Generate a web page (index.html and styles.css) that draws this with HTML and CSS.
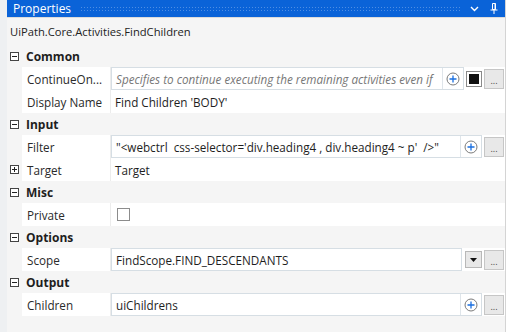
FILE: index.html
```html
<!DOCTYPE html>
<html lang="en">
<head>
  <meta charset="UTF-8"/>
  <title>Properties</title>
  <link rel="stylesheet" href="styles.css">
</head>
<body>
  <div class="frame">
    <div class="edge"></div>
    <div class="panel">

      <!-- Barra de título -->
      <div class="titlebar">
        <span class="title">Properties</span>
        <span class="grip"></span>
        <svg class="chev" width="9" height="6" viewBox="0 0 9 6"><path d="M1 1 L4.5 4.5 L8 1" fill="none" stroke="#fff" stroke-width="1.4"/></svg>
        <svg class="pin" width="8" height="11" viewBox="0 0 8 11"><path d="M2.5 0.5 H5.5 V6.5 H2.5 Z M5 0.5 V6.5 M0.5 7 H7.5 M4 7 V11" fill="none" stroke="#fff" stroke-width="1"/></svg>
      </div>

      <div class="activity">UiPath.Core.Activities.FindChildren</div>

      <!-- Common -->
      <div class="cat"><span class="toggle"></span>Common</div>
      <div class="row">
        <div class="indent"></div>
        <div class="label">ContinueOn...</div>
        <div class="value">
          <div class="box">
            <span class="text hint">Specifies to continue executing the remaining activities even if</span>
            <span class="plus"><svg width="14" height="14" viewBox="0 0 14 14"><circle cx="7" cy="7" r="6" fill="#fff" stroke="#7a7a7a"/><path d="M7 3.5 V10.5 M3.5 7 H10.5" stroke="#1a6fe0" stroke-width="1.3"/></svg></span>
          </div>
          <span class="check-black"><span></span></span>
          <span class="dots">...</span>
        </div>
      </div>
      <div class="row">
        <div class="indent"></div>
        <div class="label">Display Name</div>
        <div class="value"><span class="plain">Find Children 'BODY'</span></div>
      </div>

      <!-- Input -->
      <div class="cat"><span class="toggle"></span>Input</div>
      <div class="row">
        <div class="indent"></div>
        <div class="label">Filter</div>
        <div class="value">
          <div class="box">
            <span class="text">"&lt;webctrl  css-selector='div.heading4 , div.heading4 ~ p'  /&gt;"</span>
            <span class="plus"><svg width="14" height="14" viewBox="0 0 14 14"><circle cx="7" cy="7" r="6" fill="#fff" stroke="#7a7a7a"/><path d="M7 3.5 V10.5 M3.5 7 H10.5" stroke="#1a6fe0" stroke-width="1.3"/></svg></span>
          </div>
          <span class="dots">...</span>
        </div>
      </div>
      <div class="row">
        <div class="indent"><span class="toggle closed"></span></div>
        <div class="label">Target</div>
        <div class="value"><span class="plain">Target</span></div>
      </div>

      <!-- Misc -->
      <div class="cat"><span class="toggle"></span>Misc</div>
      <div class="row">
        <div class="indent"></div>
        <div class="label">Private</div>
        <div class="value"><span class="checkbox"></span></div>
      </div>

      <!-- Options -->
      <div class="cat"><span class="toggle"></span>Options</div>
      <div class="row">
        <div class="indent"></div>
        <div class="label">Scope</div>
        <div class="value">
          <div class="box">
            <span class="text">FindScope.FIND_DESCENDANTS</span>
          </div>
          <span class="drop"><svg width="7" height="4" viewBox="0 0 7 4"><path d="M0 0 H7 L3.5 4 Z" fill="#111"/></svg></span>
          <span class="dots">...</span>
        </div>
      </div>

      <!-- Output -->
      <div class="cat"><span class="toggle"></span>Output</div>
      <div class="row">
        <div class="indent"></div>
        <div class="label">Children</div>
        <div class="value">
          <div class="box">
            <span class="text">uiChildrens</span>
            <span class="plus"><svg width="14" height="14" viewBox="0 0 14 14"><circle cx="7" cy="7" r="6" fill="#fff" stroke="#7a7a7a"/><path d="M7 3.5 V10.5 M3.5 7 H10.5" stroke="#1a6fe0" stroke-width="1.3"/></svg></span>
          </div>
          <span class="dots">...</span>
        </div>
      </div>

    </div>
  </div>
</body>
</html>
```

FILE: styles.css
```css
/* === Base === */
* { margin:0; padding:0; box-sizing:border-box; }
body {
  background:#fff;
  font-family:"Open Sans", "Noto Sans", sans-serif;
  font-size:11.7px;
  color:#1e1e1e;
}
.frame { display:flex; height:332px; }
.edge { width:7px; background:#eef0f2; }
.panel {
  width:499px;
  background:#f5f5f5;
  border-right:1px solid #d4d4d4;
}

/* === Barra de título === */
.titlebar {
  height:17px;
  display:flex;
  align-items:center;
  padding:0 7px 0 6px;
  background:#0a63d8;
  color:#fff;
}
.title { font-size:12px; }
.grip {
  flex:1;
  height:5px;
  margin:0 10px 0 9px;
  background-image:radial-gradient(circle, rgba(255,255,255,.28) 0.7px, transparent 0.9px);
  background-size:3px 3px;
}
.chev { margin-right:11px; }

.activity {
  height:28px;
  line-height:27px;
  padding-left:3px;
  border-top:1px solid #dcdcdc;
  font-size:11.2px;
  color:#222;
}

/* === Categorias === */
.cat {
  height:22px;
  display:flex;
  align-items:center;
  padding-left:3px;
  font-weight:bold;
  font-size:12px;
}
.toggle {
  position:relative;
  flex:none;
  width:9px; height:9px;
  margin-right:7px;
  border:1px solid #444;
  background:#fff;
}
.toggle::before {
  content:''; position:absolute;
  left:1px; top:3px; width:5px; height:1px; background:#222;
}
.toggle.closed::after {
  content:''; position:absolute;
  left:3px; top:1px; width:1px; height:5px; background:#222;
}

/* === Linhas === */
.row {
  height:23px;
  display:flex;
}
.indent {
  width:15px;
  display:flex;
  align-items:center;
  padding-left:3px;
}
.indent .toggle { margin-right:0; }
.label {
  width:89px;
  display:flex;
  align-items:center;
  padding-left:5px;
  background:#fff;
  border-right:1px solid #ececec;
  color:#2a2a2a;
}
.value {
  flex:1;
  display:flex;
  align-items:center;
  gap:2px;
  padding-right:1px;
  background:#fff;
}
.plain { padding-left:4px; }
.box {
  flex:1;
  height:23px;
  display:flex;
  align-items:center;
  border:1px solid #d6dee4;
  background:#fff;
  overflow:hidden;
}
.text {
  flex:1;
  padding-left:4px;
  white-space:pre;
  overflow:hidden;
}
.hint { font-style:italic; color:#777; }
.plus {
  width:21px;
  height:100%;
  display:flex;
  align-items:center;
  justify-content:center;
  border-left:1px solid #dfe5ea;
}

/* === Botões === */
.dots {
  width:20px; height:20px;
  display:flex;
  align-items:flex-end;
  justify-content:center;
  padding-bottom:3px;
  background:#e8e8e8;
  border:1px solid #c6c6c6;
  font-size:9px;
  line-height:9px;
  color:#444;
}
.check-black {
  width:16px; height:16px;
  display:flex;
  align-items:center;
  justify-content:center;
  border:1px solid #8a8a8a;
  background:#fff;
}
.check-black span { width:10px; height:10px; background:#111; }
.drop {
  width:17px; height:17px;
  display:flex;
  align-items:center;
  justify-content:center;
  margin-left:1px;
  background:#e8e8e8;
  border:1px solid #b8b8b8;
}
.checkbox {
  width:13px; height:13px;
  margin-left:6px;
  border:1px solid #8c8c8c;
  background:#fff;
}
```
